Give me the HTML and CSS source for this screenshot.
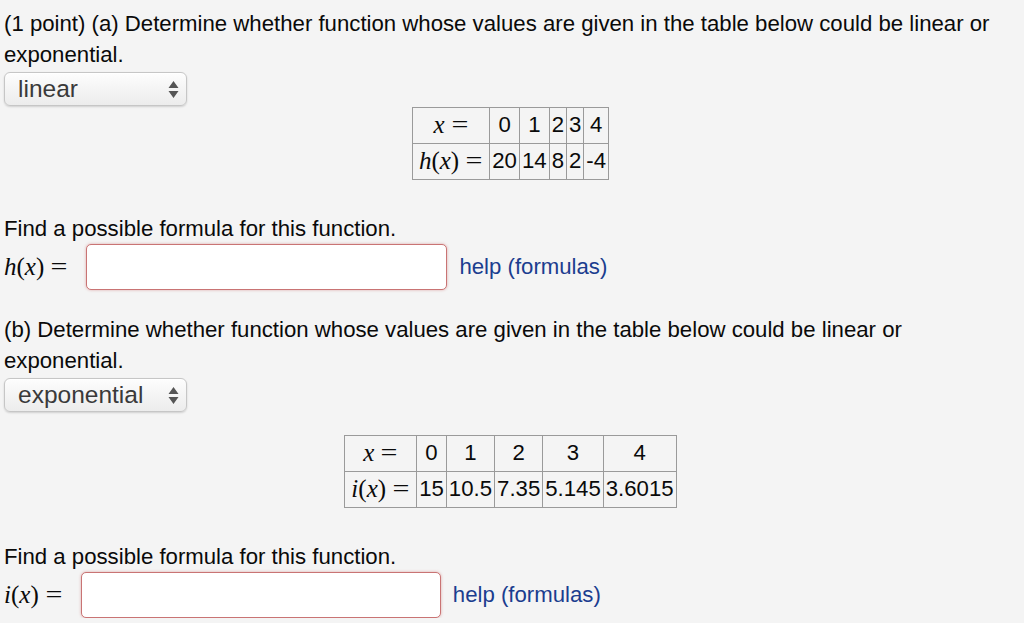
FILE: index.html
```html
<!DOCTYPE html>
<html>
<head>
<meta charset="utf-8">
<link rel="stylesheet" href="styles.css">
</head>
<body>
<div class="problem">
  <p class="q">(1 point) (a) Determine whether function whose values are given in the table below could be linear or exponential.</p>
  <div class="sel sel-a"><span>linear</span>
    <svg class="arrows" width="11" height="19" viewBox="0 0 11 19"><path d="M5.5 1 L10.5 8 L0.5 8 Z M5.5 18 L10.5 11 L0.5 11 Z" fill="#555"/></svg>
  </div>
  <div class="tablewrap ta">
    <table class="vals">
      <tr><td class="m"><i>x</i><span class="eq">=</span></td><td>0</td><td>1</td><td>2</td><td>3</td><td>4</td></tr>
      <tr><td class="m"><i>h</i>(<i>x</i>)<span class="eq">=</span></td><td>20</td><td>14</td><td>8</td><td>2</td><td>-4</td></tr>
    </table>
  </div>
  <p class="find">Find a possible formula for this function.</p>
  <div class="answer">
    <span class="m lbl"><i>h</i>(<i>x</i>)<span class="eq">=</span></span>
    <div class="inp inp-a"></div>
    <a class="help">help (formulas)</a>
  </div>

  <p class="q qb">(b) Determine whether function whose values are given in the table below could be linear or exponential.</p>
  <div class="sel sel-b"><span>exponential</span>
    <svg class="arrows" width="11" height="19" viewBox="0 0 11 19"><path d="M5.5 1 L10.5 8 L0.5 8 Z M5.5 18 L10.5 11 L0.5 11 Z" fill="#555"/></svg>
  </div>
  <div class="tablewrap tb">
    <table class="vals">
      <tr><td class="m"><i>x</i><span class="eq">=</span></td><td>0</td><td>1</td><td>2</td><td>3</td><td>4</td></tr>
      <tr><td class="m"><i>i</i>(<i>x</i>)<span class="eq">=</span></td><td>15</td><td>10.5</td><td>7.35</td><td>5.145</td><td>3.6015</td></tr>
    </table>
  </div>
  <p class="find">Find a possible formula for this function.</p>
  <div class="answer">
    <span class="m lbl"><i>i</i>(<i>x</i>)<span class="eq">=</span></span>
    <div class="inp inp-b"></div>
    <a class="help">help (formulas)</a>
  </div>
</div>
</body>
</html>
```
FILE: styles.css
```css
html, body {
  margin: 0;
  padding: 0;
  background: #f4f4f4;
}
body {
  font-family: "Liberation Sans", Arial, sans-serif;
  font-size: 22.2px;
  color: #0a0a0a;
}
.problem {
  padding: 8px 7px 0 4px;
  display: flex;
  flex-direction: column;
  align-items: flex-start;
}
p {
  margin: 0;
}
.q {
  line-height: 31px;
  width: 1000px;
}
.qb {
  margin-top: 24px;
}
.sel {
  margin-top: 2px;
  width: 183px;
  height: 34px;
  box-sizing: border-box;
  border: 1px solid #c6c6c6;
  border-radius: 6px;
  background: linear-gradient(#fdfdfd, #ececec);
  box-shadow: 0 1px 2px rgba(0,0,0,0.15), inset 0 1px 0 #fff;
  display: flex;
  align-items: center;
  justify-content: space-between;
  padding: 0 7px 0 13px;
  color: #3a3a3a;
  font-size: 24.5px;
}
.tablewrap {
  align-self: stretch;
  display: flex;
  justify-content: center;
}
.ta { margin-top: 1px; }
.tb { margin-top: 23px; }
.vals {
  border-collapse: collapse;
  border: 1px solid #7a7a7a;
}
.vals td {
  border: 1px solid #9a9a9a;
  padding: 3px 2px 4px;
  height: 28px;
  text-align: center;
  line-height: 28px;
}
.vals td:first-child {
  padding: 3px 6px 4px;
}
.m {
  font-family: "Liberation Serif", "Times New Roman", serif;
  font-size: 25px;
  white-space: nowrap;
}
.m i {
  font-style: italic;
}
.eq {
  display: inline-block;
  margin-left: 8px;
  margin-right: 2px;
  transform: scaleX(1.2);
}
.find {
  margin-top: 34px;
  line-height: 30px;
}
.answer {
  display: flex;
  align-items: center;
  margin-top: 0;
}
.lbl {
  margin-right: 18px;
}
.inp {
  width: 361px;
  height: 46px;
  box-sizing: border-box;
  background: #fff;
  border: 1px solid #c97474;
  border-radius: 5px;
  box-shadow: 0 0 3px rgba(200,80,80,0.45);
}
.inp-b {
  width: 360px;
}
.help {
  margin-left: 12px;
  color: #1b3d8f;
  text-decoration: none;
}
```
